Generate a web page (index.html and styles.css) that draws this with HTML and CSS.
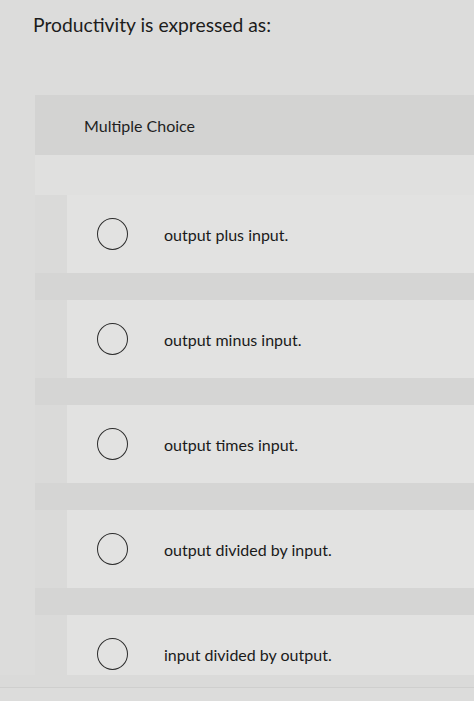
FILE: index.html
```html
<!DOCTYPE html>
<html>
<head>
<meta charset="utf-8">
<link rel="stylesheet" href="styles.css">
</head>
<body>
<div class="page">
  <h1 class="question">Productivity is expressed as:</h1>
  <div class="card">
    <div class="card-head">Multiple Choice</div>
    <div class="options">
      <div class="option"><div class="strip"></div><div class="panel"><span class="radio"></span><span class="label">output plus input.</span></div></div>
      <div class="option"><div class="strip"></div><div class="panel"><span class="radio"></span><span class="label">output minus input.</span></div></div>
      <div class="option"><div class="strip"></div><div class="panel"><span class="radio"></span><span class="label">output times input.</span></div></div>
      <div class="option"><div class="strip"></div><div class="panel"><span class="radio"></span><span class="label">output divided by input.</span></div></div>
      <div class="option"><div class="strip"></div><div class="panel"><span class="radio"></span><span class="label">input divided by output.</span></div></div>
    </div>
  </div>
  <div class="foot"></div>
</div>
</body>
</html>
```
FILE: styles.css
```css
html, body {
  margin: 0;
  padding: 0;
  height: 701px;
  overflow: hidden;
}
body {
  background: #dcdcdb;
  font-family: Lato, "Open Sans", sans-serif;
  color: #222;
}
.page {
  display: flex;
  flex-direction: column;
}
.question {
  margin: 0;
  padding: 13px 0 0 33px;
  font-size: 19.3px;
  line-height: 24px;
  font-weight: 400;
  color: #1c1c1c;
}
.card {
  margin: 58px 0 0 35px;
  height: 580px;
  overflow: hidden;
  background: #d5d5d4;
  display: flex;
  flex-direction: column;
}
.card-head {
  height: 60px;
  flex: none;
  display: flex;
  align-items: center;
  padding-left: 49px;
  font-size: 16px;
  background: #d3d3d2;
  color: #1f1f1f;
}
.options {
  padding-top: 40px;
  background: linear-gradient(#e0e0df 0 40px, transparent 40px);
  display: flex;
  flex-direction: column;
  gap: 27px;
}
.option {
  display: flex;
  height: 78px;
  flex: none;
}
.strip {
  width: 32px;
  background: #dadad9;
}
.panel {
  flex: 1;
  background: #e2e2e1;
  display: flex;
  align-items: center;
  padding-left: 30px;
}
.radio {
  width: 29px;
  height: 30px;
  border: 1.6px solid #2c2c2c;
  border-radius: 50%;
  flex: none;
}
.label {
  margin-left: 36px;
  font-size: 16px;
  color: #1a1a1a;
}
.foot {
  height: 12px;
  border-bottom: 1px solid #cfcfce;
  background: #dadad9;
}
```
